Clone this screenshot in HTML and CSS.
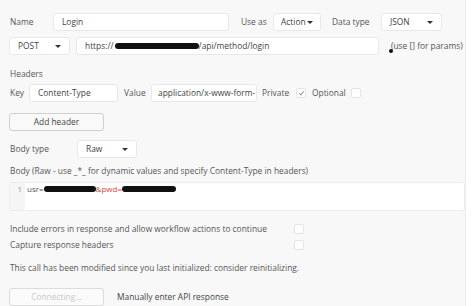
FILE: index.html
```html
<!DOCTYPE html>
<html lang="en">
<head>
  <meta charset="UTF-8">
  <title>API Call</title>
  <link rel="stylesheet" href="styles.css">
</head>
<body>

  <!-- Call editor -->
  <div class="call-panel">

    <div class="row row-top">
      <span class="label label-name">Name</span>
      <div class="field name-field">Login</div>
      <span class="label label-use">Use as</span>
      <div class="field dropdown action-drop">Action <span class="caret"></span></div>
      <span class="label label-type">Data type</span>
      <div class="field dropdown json-drop">JSON <span class="caret"></span></div>
    </div>

    <div class="row row-url">
      <div class="field dropdown method-drop">POST <span class="caret"></span></div>
      <div class="field url-field">https://<span class="scribble scribble-url"></span>/api/method/login</div>
      <span class="params-note"><span class="dot"></span>(use [] for params)</span>
    </div>

    <div class="section-title">Headers</div>

    <div class="row row-header">
      <span class="label label-key">Key</span>
      <div class="field key-field">Content-Type</div>
      <span class="label label-value">Value</span>
      <div class="field value-field">application/x-www-form-</div>
      <span class="label label-private">Private</span>
      <span class="checkbox checked"></span>
      <span class="label label-optional">Optional</span>
      <span class="checkbox"></span>
    </div>

    <div class="button add-header">Add header</div>

    <div class="row row-body">
      <span class="label label-body">Body type</span>
      <div class="field dropdown raw-drop">Raw <span class="caret"></span></div>
    </div>

    <div class="body-note">Body (Raw - use _*_ for dynamic values and specify Content-Type in headers)</div>

    <div class="code-box">
      <div class="gutter">1</div>
      <div class="code">usr=<span class="scribble scribble-usr"></span><span class="amp">&amp;pwd=</span><span class="scribble scribble-pwd"></span></div>
    </div>

    <div class="row row-check first-check">
      <span class="check-text">Include errors in response and allow workflow actions to continue</span>
      <span class="checkbox"></span>
    </div>
    <div class="row row-check">
      <span class="check-text">Capture response headers</span>
      <span class="checkbox"></span>
    </div>

    <div class="notice">This call has been modified since you last initialized: consider reinitializing.</div>

    <div class="row row-bottom">
      <div class="button connecting">Connecting...</div>
      <span class="label manual">Manually enter API response</span>
    </div>

  </div>

</body>
</html>
```

FILE: styles.css
```css
body {
  margin: 0;
  font-family: 'Open Sans', 'Noto Sans', sans-serif;
  font-size: 8.4px;
  line-height: 12px;
  color: #555;
  background-color: #fff;
}

.call-panel {
  height: 306px;
  padding: 13px 0 0 9px;
  box-sizing: border-box;
  width: 466px;
  background-color: #f8f8f8;
  border-right: 1px solid #ececec;
}

.row {
  display: flex;
  align-items: center;
}

.label {
  white-space: nowrap;
}

.field {
  height: 18px;
  box-sizing: border-box;
  background: white;
  border: 1px solid #e8e8e8;
  border-radius: 3px;
  padding: 0 8px;
  display: flex;
  align-items: center;
  color: #444;
  white-space: nowrap;
  overflow: hidden;
}

.dropdown {
  justify-content: space-between;
}

.caret {
  width: 0;
  height: 0;
  border-left: 3px solid transparent;
  border-right: 3px solid transparent;
  border-top: 3px solid #333;
}

/* first row */
.label-name { width: 43px; padding-left: 1px; }
.name-field { width: 176px; }
.label-use { margin-left: 12px; width: 32px; }
.action-drop { width: 48px; padding: 0 7px 0 7px; }
.label-type { margin-left: 11px; width: 49px; }
.json-drop { width: 61px; }

/* url row */
.row-url { margin-top: 6px; }
.method-drop { width: 61px; }
.url-field { width: 303px; margin-left: 6px; }
.params-note {
  position: relative;
  margin-left: 12px;
  white-space: nowrap;
}
.dot {
  position: absolute;
  left: -2px;
  top: 9px;
  width: 4px;
  height: 4px;
  border-radius: 50%;
  background: #111;
}

.scribble {
  display: inline-block;
  height: 6px;
  border-radius: 3px;
  background: #111;
}
.scribble-url { width: 84px; margin-left: 1px; }

.section-title {
  margin-top: 13px;
  padding-left: 1px;
}

/* headers row */
.row-header { margin-top: 4px; }
.label-key { width: 19px; padding-left: 1px; }
.key-field { width: 89px; }
.label-value { margin-left: 6px; width: 27px; }
.value-field { width: 106px; padding-left: 6px; }
.label-private { margin-left: 5px; width: 34px; }
.label-optional { margin-left: 6px; width: 39px; }

.checkbox {
  display: inline-block;
  width: 10px;
  height: 10px;
  box-sizing: border-box;
  background: white;
  border: 1px solid #e4e4e4;
  border-radius: 2px;
  position: relative;
}
.checkbox.checked::after {
  content: "";
  position: absolute;
  left: 3px;
  top: 1px;
  width: 2px;
  height: 4px;
  border-right: 1px solid #999;
  border-bottom: 1px solid #999;
  transform: rotate(40deg);
}

.button {
  width: 95px;
  height: 18px;
  box-sizing: border-box;
  border: 1px solid #cfcfcf;
  border-radius: 3px;
  background: #f9f9f9;
  display: flex;
  align-items: center;
  justify-content: center;
  color: #444;
}

.add-header { margin-top: 11px; }

/* body */
.row-body { margin-top: 9px; }
.label-body { width: 67px; padding-left: 1px; }
.raw-drop { width: 60px; }

.body-note {
  margin-top: 7px;
  padding-left: 1px;
}

.code-box {
  display: flex;
  margin-top: 5px;
  width: 456px;
  height: 29px;
  box-sizing: border-box;
  border: 1px solid #ececec;
  border-radius: 3px;
  background: white;
  overflow: hidden;
}
.gutter {
  width: 15px;
  background: #f5f5f5;
  color: #999;
  font-size: 8px;
  text-align: right;
  padding: 0 3px 0 0;
  box-sizing: border-box;
  flex-shrink: 0;
}
.code {
  padding: 0 0 0 2px;
  font-size: 8px;
  color: #555;
  display: flex;
  align-items: center;
  height: 12px;
}
.scribble-usr { width: 52px; }
.scribble-pwd { width: 54px; }
.amp { color: #e0443a; }

/* checks */
.row-check { margin-top: 6px; height: 10px; }
.first-check { margin-top: 13px; }
.check-text { width: 284px; padding-left: 1px; white-space: nowrap; }

.notice {
  margin-top: 12px;
  padding-left: 1px;
}

.row-bottom { margin-top: 14px; }
.connecting {
  color: #c8c8c8;
  border-color: #dcdcdc;
  background: #fbfbfb;
}
.manual { margin-left: 13px; color: #444; }
```
